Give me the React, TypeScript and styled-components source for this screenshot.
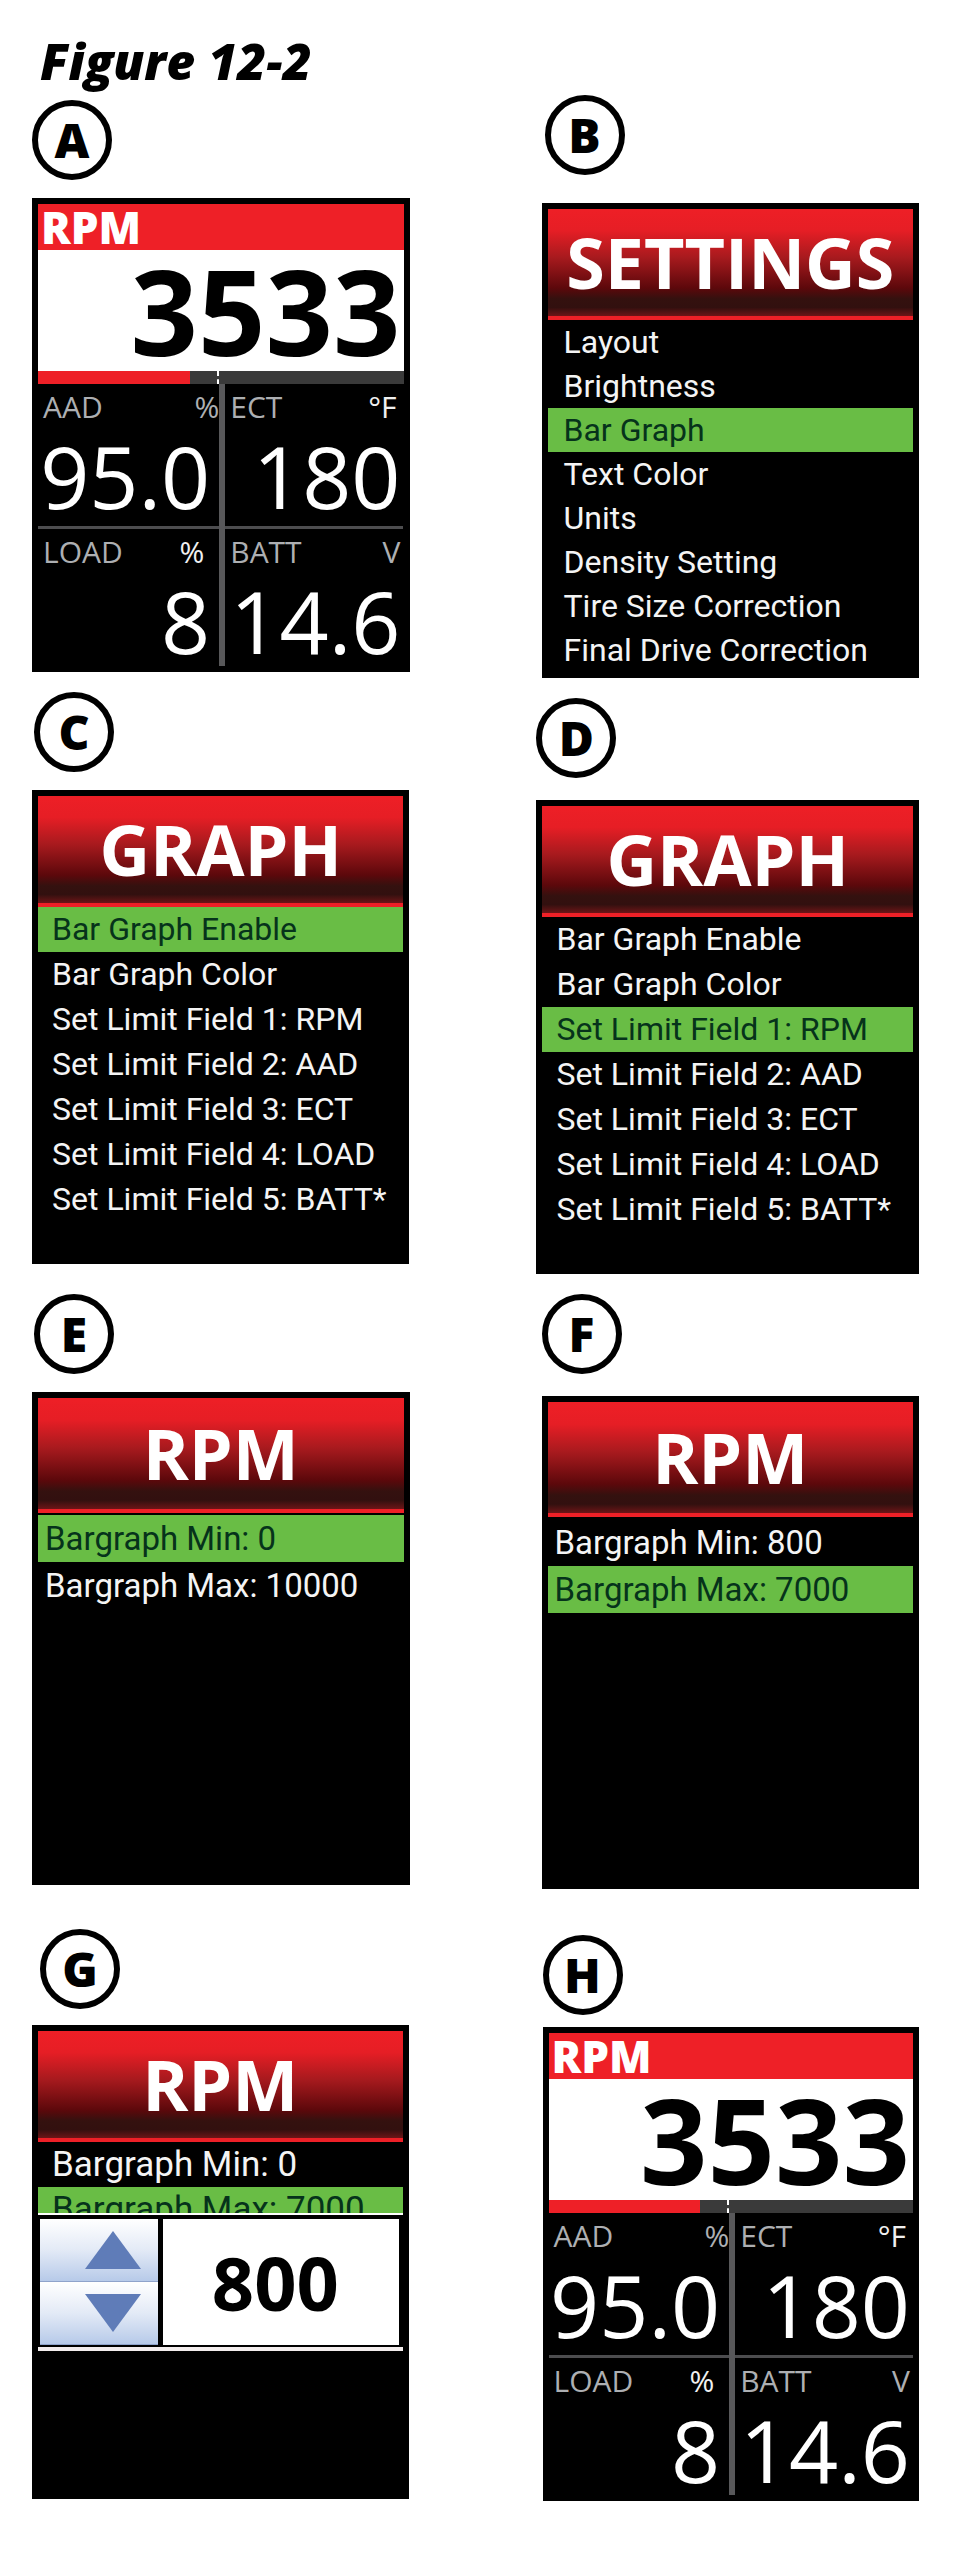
import React, { ReactNode } from "react";
import styled, { createGlobalStyle } from "styled-components";

const GlobalStyle = createGlobalStyle`
  *, *::before, *::after { box-sizing: border-box; }
  body {
    margin: 0;
    background: #fff;
    color: #000;
    font-family: "Open Sans", "Noto Sans", sans-serif;
  }
`;

const Page = styled.main`
  padding: 27px 44px 58px 32px;
`;

const FigureTitle = styled.h1`
  margin: 0;
  padding-left: 8px;
  font-size: 50px;
  line-height: 68px;
  font-weight: 800;
  font-style: italic;
`;

const StepRow = styled.div<{ $top?: number; $columns?: string; $gap?: number }>`
  display: grid;
  grid-template-columns: ${(p) => p.$columns ?? "1fr 1fr"};
  column-gap: ${(p) => p.$gap ?? 132}px;
  align-items: start;
  margin-top: ${(p) => p.$top ?? 0}px;
`;

const Step = styled.section<{ $lead?: number; $gap: number }>`
  display: flex;
  flex-direction: column;
  min-width: 0;
  padding-top: ${(p) => p.$lead ?? 0}px;
  gap: ${(p) => p.$gap}px;
`;

const Badge = styled.h2<{ $indent?: number }>`
  display: flex;
  align-items: center;
  justify-content: center;
  width: 80px;
  height: 80px;
  margin: 0 0 0 ${(p) => p.$indent ?? 0}px;
  border: 6px solid #000;
  border-radius: 50%;
  font-size: 48px;
  line-height: 60px;
  font-weight: 800;
`;

const Screen = styled.div<{ $height?: number }>`
  min-height: ${(p) => p.$height ?? 474}px;
  border: 6px solid #000;
  background: #000;
  color: #fff;
`;

const ScreenTitle = styled.h3<{ $tall?: boolean }>`
  margin: 0;
  border-bottom: 4px solid #ee2027;
  background: linear-gradient(
    #ee1f26 0%,
    #e61e25 20%,
    #a81a1e 45%,
    #5c080b 74%,
    #34110f 84%,
    #32100f 92%,
    #6d1517 100%
  );
  font-size: 70px;
  line-height: ${(p) => (p.$tall ? 111 : 107)}px;
  font-weight: 700;
  text-align: center;
`;

const Menu = styled.ul<{ $top?: number }>`
  list-style: none;
  margin: 0;
  padding: ${(p) => p.$top ?? 0}px 0 0;
`;

const MenuItem = styled.button<{
  $selected: boolean;
  $inset: number;
  $row: number;
  $size: number;
}>`
  display: block;
  width: 100%;
  border: 0;
  padding: 0 0 0 ${(p) => p.$inset}px;
  background: ${(p) => (p.$selected ? "#69bd45" : "#000")};
  color: ${(p) => (p.$selected ? "#06331b" : "#f4f4f4")};
  font-family: Roboto, "Open Sans", sans-serif;
  font-size: ${(p) => p.$size}px;
  line-height: ${(p) => p.$row}px;
  text-align: left;
  white-space: nowrap;
`;

const FieldName = styled.div`
  padding-left: 3px;
  background: #ee2027;
  font-size: 44px;
  line-height: 46px;
  font-weight: 800;
`;

const MainReading = styled.div`
  padding-right: 3px;
  background: #fff;
  color: #000;
  font-size: 118px;
  line-height: 121px;
  font-weight: 700;
  text-align: right;
`;

const BarTrack = styled.div`
  display: flex;
  position: relative;
  height: 13px;
  background: #3a3a3a;
`;

const BarFill = styled.div`
  background: #ee2027;
`;

const BarMarker = styled.span`
  position: absolute;
  top: 0;
  bottom: 0;
  left: 49%;
  border-left: 2px dashed #fff;
`;

const GaugeGrid = styled.div`
  display: grid;
  grid-template-columns: 181fr 6px 178fr;
`;

const GaugeDivider = styled.div`
  grid-column: 2;
  grid-row: 1 / span 2;
  background: #58585a;
`;

const Gauge = styled.div<{ $line?: boolean; $column: number; $row: number }>`
  grid-column: ${(p) => p.$column};
  grid-row: ${(p) => p.$row};
  min-width: 0;
  height: ${(p) => (p.$line ? 145 : 137)}px;
  border-bottom: ${(p) => (p.$line ? "3px solid #4d4d4f" : "0")};
`;

const GaugeHead = styled.div<{ $inset: number }>`
  display: flex;
  justify-content: space-between;
  padding: 0 ${(p) => p.$inset}px 0 5px;
  color: #adafb2;
  font-size: 30px;
  line-height: 46px;
`;

const GaugeUnit = styled.span<{ $bright?: boolean }>`
  color: ${(p) => (p.$bright ? "#f0f0f0" : "inherit")};
`;

const GaugeValue = styled.div<{ $inset: number }>`
  padding-right: ${(p) => p.$inset}px;
  font-size: 86px;
  line-height: 92px;
  text-align: right;
  white-space: nowrap;
`;

const ClippedRow = styled.li`
  height: 26px;
  overflow: hidden;
`;

const Spinner = styled.div`
  display: grid;
  grid-template-columns: 118fr 235fr;
  column-gap: 5px;
  height: 138px;
  padding: 4px 4px 2px 2px;
  border-top: 2px solid #fff;
  border-bottom: 4px solid #f3eded;
`;

const SpinnerButtons = styled.div`
  display: grid;
  grid-template-rows: 1fr 1fr;
`;

const StepButton = styled.button`
  display: flex;
  align-items: center;
  justify-content: flex-end;
  padding: 0 17px 0 0;
  border: 0;
  border-bottom: 1px solid #8fa3cb;
  background: linear-gradient(#ffffff, #e3eaf6 50%, #b7cae9);
`;

const ValueInput = styled.input`
  width: 100%;
  min-width: 0;
  border: 0;
  padding: 0 11px 0 0;
  background: #fff;
  color: #000;
  font-family: "Open Sans", "Noto Sans", sans-serif;
  font-size: 74px;
  font-weight: 700;
  text-align: center;
`;

type StepProps = {
  letter: string;
  lead?: number;
  gap: number;
  indent?: number;
  children: ReactNode;
};

function FigureStep({ letter, lead, gap, indent, children }: StepProps) {
  return (
    <Step $lead={lead} $gap={gap}>
      <Badge $indent={indent}>{letter}</Badge>
      {children}
    </Step>
  );
}

type MenuScreenProps = {
  title: string;
  items: string[];
  selected: number;
  inset: number;
  row: number;
  size?: number;
  tall?: boolean;
};

function MenuScreen({ title, items, selected, inset, row, size = 32, tall }: MenuScreenProps) {
  return (
    <Screen $height={tall ? 493 : 474}>
      <ScreenTitle $tall={tall}>{title}</ScreenTitle>
      <Menu $top={tall ? 2 : 0}>
        {items.map((item, i) => (
          <li key={item}>
            <MenuItem type="button" $selected={i === selected} $inset={inset} $row={row} $size={size}>
              {item}
            </MenuItem>
          </li>
        ))}
      </Menu>
    </Screen>
  );
}

const gauges = [
  { name: "AAD", unit: "%", value: "95.0", inset: 0, bright: false },
  { name: "ECT", unit: "°F", value: "180", inset: 7, bright: true },
  { name: "LOAD", unit: "%", value: "8", inset: 15, bright: true },
  { name: "BATT", unit: "V", value: "14.6", inset: 3, bright: false },
];

function GaugeScreen() {
  const fill = 41.6;
  return (
    <Screen>
      <FieldName>RPM</FieldName>
      <MainReading>3533</MainReading>
      <BarTrack role="meter" aria-label="RPM" aria-valuemin={0} aria-valuemax={100} aria-valuenow={fill}>
        <BarFill style={{ width: `${fill}%` }} />
        <BarMarker />
      </BarTrack>
      <GaugeGrid>
        <GaugeDivider />
        {gauges.map((g, i) => (
          <Gauge key={g.name} $line={i < 2} $column={i % 2 ? 3 : 1} $row={i < 2 ? 1 : 2}>
            <GaugeHead $inset={g.inset}>
              <span>{g.name}</span>
              <GaugeUnit $bright={g.bright}>{g.unit}</GaugeUnit>
            </GaugeHead>
            <GaugeValue $inset={i % 2 ? 3 : 9}>{g.value}</GaugeValue>
          </Gauge>
        ))}
      </GaugeGrid>
    </Screen>
  );
}

const settings = [
  "Layout",
  "Brightness",
  "Bar Graph",
  "Text Color",
  "Units",
  "Density Setting",
  "Tire Size Correction",
  "Final Drive Correction",
];

const graphItems = [
  "Bar Graph Enable",
  "Bar Graph Color",
  "Set Limit Field 1: RPM",
  "Set Limit Field 2: AAD",
  "Set Limit Field 3: ECT",
  "Set Limit Field 4: LOAD",
  "Set Limit Field 5: BATT*",
];

export default function App() {
  return (
    <>
      <GlobalStyle />
      <Page>
        <FigureTitle>Figure 12-2</FigureTitle>

        <StepRow>
          <FigureStep letter="A" lead={5} gap={18}>
            <GaugeScreen />
          </FigureStep>
          <FigureStep letter="B" gap={28} indent={3}>
            <MenuScreen title="SETTINGS" items={settings} selected={2} inset={16} row={44} />
          </FigureStep>
        </StepRow>

        <StepRow $top={14} $columns="377fr 382fr" $gap={127}>
          <FigureStep letter="C" gap={18} indent={2}>
            <MenuScreen title="GRAPH" items={graphItems} selected={0} inset={14} row={45} />
          </FigureStep>
          <FigureStep letter="D" lead={6} gap={22}>
            <MenuScreen title="GRAPH" items={graphItems} selected={2} inset={14} row={45} />
          </FigureStep>
        </StepRow>

        <StepRow $top={20}>
          <FigureStep letter="E" gap={18} indent={2}>
            <MenuScreen
              title="RPM"
              items={["Bargraph Min: 0", "Bargraph Max: 10000"]}
              selected={0}
              inset={7}
              row={47}
              size={33}
              tall
            />
          </FigureStep>
          <FigureStep letter="F" gap={22}>
            <MenuScreen
              title="RPM"
              items={["Bargraph Min: 800", "Bargraph Max: 7000"]}
              selected={1}
              inset={7}
              row={47}
              size={33}
              tall
            />
          </FigureStep>
        </StepRow>

        <StepRow $top={40} $gap={134}>
          <FigureStep letter="G" gap={16} indent={8}>
            <Screen>
              <ScreenTitle>RPM</ScreenTitle>
              <Menu>
                <li>
                  <MenuItem type="button" $selected={false} $inset={14} $row={45} $size={35}>
                    Bargraph Min: 0
                  </MenuItem>
                </li>
                <ClippedRow>
                  <MenuItem type="button" $selected $inset={14} $row={45} $size={35}>
                    Bargraph Max: 7000
                  </MenuItem>
                </ClippedRow>
              </Menu>
              <Spinner>
                <SpinnerButtons>
                  <StepButton type="button" aria-label="Increase">
                    <svg width="56" height="38" viewBox="0 0 56 38" aria-hidden="true">
                      <path d="M28 0 56 38H0Z" fill="#5f7cb8" />
                    </svg>
                  </StepButton>
                  <StepButton type="button" aria-label="Decrease">
                    <svg width="56" height="38" viewBox="0 0 56 38" aria-hidden="true">
                      <path d="M0 0H56L28 38Z" fill="#5f7cb8" />
                    </svg>
                  </StepButton>
                </SpinnerButtons>
                <ValueInput type="text" inputMode="numeric" aria-label="Bargraph Max" defaultValue="800" />
              </Spinner>
            </Screen>
          </FigureStep>
          <FigureStep letter="H" lead={6} gap={12}>
            <GaugeScreen />
          </FigureStep>
        </StepRow>
      </Page>
    </>
  );
}
